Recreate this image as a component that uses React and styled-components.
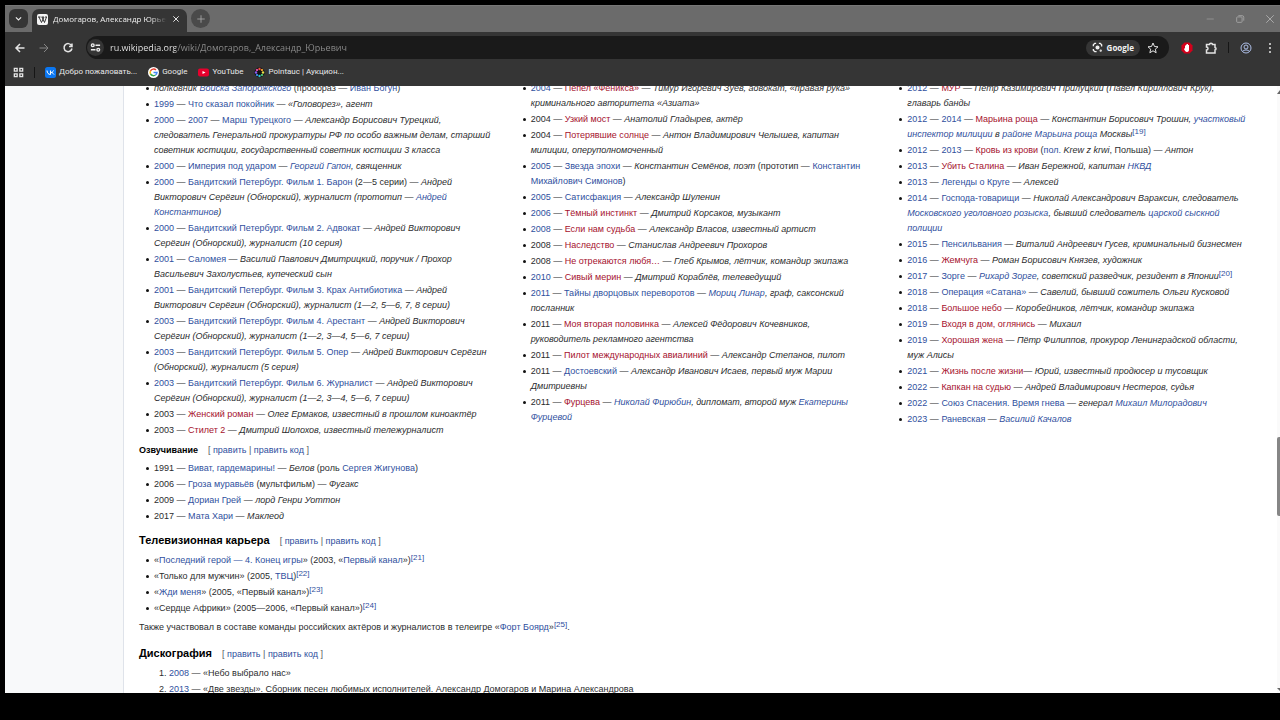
import React from 'react';
import styled, { createGlobalStyle } from 'styled-components';

// Global styles
const GlobalStyle = createGlobalStyle`
  * {
    box-sizing: border-box;
  }

  body {
    margin: 0;
    background: #000;
  }

  button {
    border: 0;
    padding: 0;
    background: none;
    color: inherit;
    font: inherit;
  }
`;

// Browser window
const Window = styled.div`
  display: flex;
  flex-direction: column;
  height: 100vh;
  padding: 5px 0 27px 5px;
  overflow: hidden;
  font-family: 'Open Sans', 'Noto Sans', sans-serif;
`;

const TabStrip = styled.header`
  display: flex;
  align-items: flex-end;
  flex: none;
  height: 27px;
  padding-left: 4px;
  background: #6b6b6b;
  border-top: 1px solid #777;
`;

const StripButton = styled.button`
  display: grid;
  place-items: center;
  width: 19px;
  height: 19px;
  margin: 0 4px 4px 0;
  border-radius: ${({ $round }) => ($round ? '50%' : '6px')};
  background: ${({ $round }) => ($round ? '#4a4a4a' : '#353535')};
  color: ${({ $round }) => ($round ? '#aaa' : '#eee')};
`;

const Tab = styled.div`
  display: flex;
  align-items: center;
  gap: 5px;
  width: 155px;
  height: 23px;
  margin-right: 4px;
  padding: 0 7px 3px 5px;
  border-radius: 7px 7px 0 0;
  background: #353535;
  color: #eee;
`;

const TabTitle = styled.span`
  flex: 1;
  overflow: hidden;
  font-size: 8px;
  line-height: 12px;
  white-space: nowrap;
  mask-image: linear-gradient(to right, #000 85%, transparent);
`;

const IconButton = styled.button`
  display: grid;
  place-items: center;
  flex: none;
  color: ${({ $color }) => $color || '#e4e4e4'};
`;

const WindowControls = styled.div`
  display: flex;
  align-items: center;
  gap: 20px;
  height: 26px;
  margin-left: auto;
  padding-right: 5px;
`;

const Toolbar = styled.nav`
  display: flex;
  align-items: center;
  flex: none;
  gap: 12px;
  height: 31px;
  padding: 0 4px 0 9px;
  background: #353535;
`;

const AddressBar = styled.div`
  display: flex;
  align-items: center;
  flex: 1;
  gap: 6px;
  height: 23px;
  padding: 0 10px 0 1px;
  border-radius: 12px;
  background: #1a1a1a;
`;

const SiteInfo = styled.button`
  display: grid;
  place-items: center;
  width: 17px;
  height: 17px;
  border-radius: 50%;
  background: #353535;
  color: #eee;
`;

const AddressInput = styled.input`
  flex: 1;
  min-width: 0;
  padding: 0;
  border: 0;
  outline: 0;
  background: linear-gradient(to right, #f2f2f2 66px, #8f8f8f 66px);
  background-clip: text;
  -webkit-background-clip: text;
  color: transparent;
  font-family: inherit;
  font-size: 9px;
  line-height: 16px;
`;

const LensButton = styled.button`
  display: flex;
  align-items: center;
  gap: 4px;
  height: 16px;
  margin-right: 1px;
  padding: 0 6px;
  border-radius: 8px;
  background: #353535;
  color: #f2f2f2;
  font-size: 8px;
  font-weight: 700;
`;

const Separator = styled.span`
  width: 1px;
  height: 11px;
  margin: 0 -1px;
  background: #161616;
`;

const BookmarksBar = styled.nav`
  display: flex;
  align-items: center;
  flex: none;
  gap: 11px;
  height: 23px;
  padding: 0 8px 5px;
  background: #353535;
`;

const Bookmark = styled.a`
  display: flex;
  align-items: center;
  gap: 3px;
  color: #e8e8e8;
  font-family: Roboto, 'Noto Sans', sans-serif;
  font-size: 8px;
  line-height: 12px;
  text-decoration: none;
`;

// Article
const Viewport = styled.div`
  display: flex;
  flex: 1;
  min-height: 0;
  overflow: hidden;
  background: #fff;
`;

const SidePanel = styled.aside`
  flex: none;
  width: 119px;
  border-right: 1px solid #dfe3ea;
  background: #f8f9fa;
`;

const Article = styled.main`
  flex: 1;
  min-width: 0;
  margin-top: -5px;
  padding: 0 17px 0 15px;
  color: #2b2c2e;
  font-family: 'Liberation Sans', Arial, sans-serif;
  font-size: 9px;
  line-height: 15px;
`;

const Columns = styled.div`
  display: grid;
  grid-template-columns: repeat(3, 1fr);
  gap: 9px;
`;

const List = styled.ul`
  margin: 0;
  padding: 0 12px 0 15px;
  list-style: none;

  li {
    margin-bottom: 1px;
  }

  li::before {
    content: '';
    display: inline-block;
    width: 3px;
    height: 3px;
    margin: 0 5px 0 -8px;
    border-radius: 50%;
    background: #111;
    vertical-align: 1px;
  }
`;

const NumberedList = styled.ol`
  margin: 0;
  padding-left: 30px;

  li {
    margin-bottom: 1px;
    white-space: nowrap;
  }
`;

const Paragraph = styled.p`
  margin: 4px 0 10px;
`;

const Heading = styled.div`
  display: flex;
  align-items: baseline;
  gap: 10px;
  margin: ${({ $level }) => ($level === 4 ? '3px 0 3px' : '8px 0 4px')};

  h3,
  h4 {
    margin: 0;
    color: #000;
    font-size: ${({ $level }) => ($level === 4 ? '9px' : '11px')};
    line-height: 16px;
  }
`;

const EditLinks = styled.span`
  color: #54595d;
`;

const Link = styled.a`
  color: ${({ $missing }) => ($missing ? '#a5112d' : '#2f4f9e')};
  text-decoration: none;
`;

const Sup = styled.sup`
  font-size: 8px;
  line-height: 1;
  vertical-align: 3px;
`;

const Scrollbar = styled.div`
  display: flex;
  flex-direction: column;
  flex: none;
  width: 3px;
  padding: 4px 0 2px;
  background: #fafafa;
`;

const ScrollSpace = styled.span`
  flex: ${({ $grow }) => $grow};
`;

const ScrollThumb = styled.span`
  height: 79px;
  border-radius: 2px 0 0 2px;
  background: #868686;
`;

const L = ({ children }) => <Link href="#">{children}</Link>;
const R = ({ children }) => <Link href="#" $missing>{children}</Link>;
const Ref = ({ n }) => <Sup><L>[{n}]</L></Sup>;

const Icon = ({ size = 12, box = 24, width = 2, children }) => (
  <svg
    width={size}
    height={size}
    viewBox={`0 0 ${box} ${box}`}
    fill="none"
    stroke="currentColor"
    strokeWidth={width}
    aria-hidden="true"
  >
    {children}
  </svg>
);

const SectionHeading = ({ level = 3, children }) => {
  const Tag = `h${level}`;
  return (
    <Heading $level={level}>
      <Tag>{children}</Tag>
      <EditLinks>[ <L>править</L> | <L>править код</L> ]</EditLinks>
    </Heading>
  );
};

const BrowserTabs = () => (
  <TabStrip>
    <StripButton aria-label="Поиск вкладок">
      <Icon size={9} width={3}><path d="M5 9l7 7 7-7" /></Icon>
    </StripButton>
    <Tab>
      <svg width="11" height="11" viewBox="0 0 22 22" aria-hidden="true">
        <rect width="22" height="22" rx="4" fill="#f4f4f4" />
        <path d="M2 6h5M9 6h5M16 6h4M4 6l5 11 5-11M10 6l5 11 4-11" stroke="#222" strokeWidth="1.8" fill="none" />
      </svg>
      <TabTitle>Домогаров, Александр Юрьевич</TabTitle>
      <IconButton aria-label="Закрыть вкладку">
        <Icon size={8} width={3}><path d="M4 4l16 16M20 4L4 20" /></Icon>
      </IconButton>
    </Tab>
    <StripButton $round aria-label="Новая вкладка">
      <Icon size={10}><path d="M12 3v18M3 12h18" /></Icon>
    </StripButton>
    <WindowControls>
      <IconButton $color="#999" aria-label="Свернуть">
        <Icon size={10}><path d="M4 12h17" /></Icon>
      </IconButton>
      <IconButton $color="#aaa" aria-label="Развернуть">
        <Icon size={10}>
          <rect x="4" y="7" width="13" height="13" rx="2" />
          <path d="M8 4h9a4 4 0 0 1 4 4v8" />
        </Icon>
      </IconButton>
      <IconButton $color="#b4b4b4" aria-label="Закрыть">
        <Icon size={10}><path d="M3 3l18 18M21 3L3 21" /></Icon>
      </IconButton>
    </WindowControls>
  </TabStrip>
);

const BrowserToolbar = () => (
  <Toolbar>
    <IconButton aria-label="Назад">
      <Icon width={3}><path d="M21 12H4M12 4l-8 8 8 8" /></Icon>
    </IconButton>
    <IconButton $color="#858585" aria-label="Вперёд">
      <Icon><path d="M3 12h17M12 4l8 8-8 8" /></Icon>
    </IconButton>
    <IconButton aria-label="Обновить">
      <Icon width={3}><path d="M19 7a8 8 0 1 0 1 6M20 3v6h-6" /></Icon>
    </IconButton>
    <AddressBar>
      <SiteInfo aria-label="Сведения о сайте">
        <Icon size={11} width={3}>
          <circle cx="6" cy="7" r="3" />
          <circle cx="18" cy="17" r="3" />
          <path d="M12 7h10M2 17h10" />
        </Icon>
      </SiteInfo>
      <AddressInput
        aria-label="Адресная строка"
        defaultValue="ru.wikipedia.org/wiki/Домогаров,_Александр_Юрьевич"
      />
      <LensButton>
        <Icon size={11} width={3}>
          <path d="M3 9V6l3-3h3M15 3h3l3 3v4M3 15v3l3 3h4" />
          <circle cx="12" cy="12" r="3" fill="currentColor" />
          <circle cx="19" cy="19" r="1" />
        </Icon>
        Google
      </LensButton>
      <IconButton aria-label="Добавить в закладки">
        <Icon><path d="M12 2l3 7 7 .6-5.4 4.8L18.300 21.500 12 17.600 5.700 21.500l1.700-7.100L2 9.600 9 9z" /></Icon>
      </IconButton>
    </AddressBar>
    <IconButton aria-label="Блокировщик рекламы">
      <svg width="12" height="12" viewBox="0 0 24 24" aria-hidden="true">
        <path d="M7 1h10l6 6v10l-6 6H7l-6-6V7z" fill="#d3001b" />
        <path d="M8 12V7h2V5h2v-1h2v2h2v9c0 3-1 5-4 5-3 0-5-3-6-6z" fill="#fff" />
      </svg>
    </IconButton>
    <IconButton aria-label="Расширения">
      <Icon size={12} width={3}>
        <path d="M3 5h6a3 2.500 0 0 1 6 0h5v6a2 2.500 0 0 1 0 5v6H3v-6a3 3 0 0 0 0-6z" />
      </Icon>
    </IconButton>
    <Separator />
    <IconButton $color="#aebfe8" aria-label="Профиль">
      <Icon>
        <circle cx="12" cy="12" r="10" />
        <circle cx="12" cy="10" r="4" />
        <path d="M5 19c3-4 11-4 14 0" />
      </Icon>
    </IconButton>
    <IconButton aria-label="Меню">
      <Icon>
        <g fill="currentColor" stroke="none">
          <circle cx="12" cy="4" r="2" />
          <circle cx="12" cy="12" r="2" />
          <circle cx="12" cy="20" r="2" />
        </g>
      </Icon>
    </IconButton>
  </Toolbar>
);

const Bookmarks = () => (
  <BookmarksBar>
    <IconButton aria-label="Приложения">
      <Icon size={11} width={3}>
        <path d="M3 3h6v6H3zM15 3h6v6h-6zM3 15h6v6H3zM15 15h6v6h-6z" />
      </Icon>
    </IconButton>
    <Separator />
    <Bookmark href="#">
      <svg width="11" height="11" viewBox="0 0 22 22" aria-hidden="true">
        <rect width="22" height="22" rx="5" fill="#0b77f2" />
        <path d="M4 7c0 5 3 8 7 8V7M11 11c3 0 5-1 6-4M11 11c3 0 5 1 7 4" stroke="#fff" strokeWidth="2" fill="none" />
      </svg>
      Добро пожаловать...
    </Bookmark>
    <Bookmark href="#">
      <svg width="11" height="11" viewBox="0 0 22 22" aria-hidden="true">
        <circle cx="11" cy="11" r="11" fill="#fff" />
        <g fill="none" strokeWidth="3">
          <path d="M5 8a7 7 0 0 1 11-2" stroke="#ea4335" />
          <path d="M5 8a7 7 0 0 0 0 6" stroke="#fbbc05" />
          <path d="M5 14a7 7 0 0 0 10 2" stroke="#34a853" />
          <path d="M11 11h7a7 7 0 0 1-3 5" stroke="#4285f4" />
        </g>
      </svg>
      Google
    </Bookmark>
    <Bookmark href="#">
      <svg width="11" height="11" viewBox="0 0 22 22" aria-hidden="true">
        <rect y="3" width="22" height="16" rx="4" fill="#e6002d" />
        <path d="M9 8l6 3-6 3z" fill="#fff" />
      </svg>
      YouTube
    </Bookmark>
    <Bookmark href="#">
      <svg width="11" height="11" viewBox="0 0 22 22" aria-hidden="true">
        <circle cx="11" cy="11" r="10" fill="#111" />
        {['#f04b3c', '#f7a531', '#e8e04a', '#50c878', '#2cc6c6', '#3c8cf0', '#8c5cf0', '#ee4fae'].map((c, i) => (
          <circle key={c} cx="11" cy="4" r="2.4" fill={c} transform={`rotate(${i * 45} 11 11)`} />
        ))}
      </svg>
      Pointauc | Аукцион...
    </Bookmark>
  </BookmarksBar>
);

const Filmography = () => (
  <Columns>
    <List>
      <li><i>полковник <L>Войска Запорожского</L></i> (прообраз — <L>Иван Богун</L>)</li>
      <li><L>1999</L> — <L>Что сказал покойник</L> — <i>«Головорез», агент</i></li>
      <li><L>2000</L> — <L>2007</L> — <L>Марш Турецкого</L> — <i>Александр Борисович Турецкий, следователь Генеральной прокуратуры РФ по особо важным делам, старший советник юстиции, государственный советник юстиции 3 класса</i></li>
      <li><L>2000</L> — <L>Империя под ударом</L> — <i><L>Георгий Гапон</L>, священник</i></li>
      <li><L>2000</L> — <L>Бандитский Петербург. Фильм 1. Барон</L> (2—5 серии) — <i>Андрей Викторович Серёгин (Обнорский), журналист (прототип — <L>Андрей Константинов</L>)</i></li>
      <li><L>2000</L> — <L>Бандитский Петербург. Фильм 2. Адвокат</L> — <i>Андрей Викторович Серёгин (Обнорский), журналист (10 серия)</i></li>
      <li><L>2001</L> — <L>Саломея</L> — <i>Василий Павлович Дмитрицкий, поручик / Прохор Васильевич Захолустьев, купеческий сын</i></li>
      <li><L>2001</L> — <L>Бандитский Петербург. Фильм 3. Крах Антибиотика</L> — <i>Андрей Викторович Серёгин (Обнорский), журналист (1—2, 5—6, 7, 8 серии)</i></li>
      <li><L>2003</L> — <L>Бандитский Петербург. Фильм 4. Арестант</L> — <i>Андрей Викторович Серёгин (Обнорский), журналист (1—2, 3—4, 5—6, 7 серии)</i></li>
      <li><L>2003</L> — <L>Бандитский Петербург. Фильм 5. Опер</L> — <i>Андрей Викторович Серёгин (Обнорский), журналист (5 серия)</i></li>
      <li><L>2003</L> — <L>Бандитский Петербург. Фильм 6. Журналист</L> — <i>Андрей Викторович Серёгин (Обнорский), журналист (1—2, 3—4, 5—6, 7 серии)</i></li>
      <li>2003 — <R>Женский роман</R> — <i>Олег Ермаков, известный в прошлом киноактёр</i></li>
      <li>2003 — <R>Стилет 2</R> — <i>Дмитрий Шолохов, известный тележурналист</i></li>
    </List>
    <List>
      <li><L>2004</L> — <R>Пепел «Феникса»</R> — <i>Тимур Игоревич Зуев, адвокат, «правая рука» криминального авторитета «Азиата»</i></li>
      <li>2004 — <R>Узкий мост</R> — <i>Анатолий Гладырев, актёр</i></li>
      <li>2004 — <R>Потерявшие солнце</R> — <i>Антон Владимирович Челышев, капитан милиции, оперуполномоченный</i></li>
      <li><L>2005</L> — <L>Звезда эпохи</L> — <i>Константин Семёнов, поэт</i> (прототип — <L>Константин Михайлович Симонов</L>)</li>
      <li><L>2005</L> — <L>Сатисфакция</L> — <i>Александр Шуленин</i></li>
      <li><L>2006</L> — <R>Тёмный инстинкт</R> — <i>Дмитрий Корсаков, музыкант</i></li>
      <li><L>2008</L> — <R>Если нам судьба</R> — <i>Александр Власов, известный артист</i></li>
      <li>2008 — <R>Наследство</R> — <i>Станислав Андреевич Прохоров</i></li>
      <li>2008 — <R>Не отрекаются любя…</R> — <i>Глеб Крымов, лётчик, командир экипажа</i></li>
      <li><L>2010</L> — <R>Сивый мерин</R> — <i>Дмитрий Кораблёв, телеведущий</i></li>
      <li><L>2011</L> — <L>Тайны дворцовых переворотов</L> — <i><L>Мориц Линар</L>, граф, саксонский посланник</i></li>
      <li>2011 — <R>Моя вторая половинка</R> — <i>Алексей Фёдорович Кочевников, руководитель рекламного агентства</i></li>
      <li>2011 — <R>Пилот международных авиалиний</R> — <i>Александр Степанов, пилот</i></li>
      <li>2011 — <L>Достоевский</L> — <i>Александр Иванович Исаев, первый муж Марии Дмитриевны</i></li>
      <li>2011 — <R>Фурцева</R> — <i><L>Николай Фирюбин</L>, дипломат, второй муж <L>Екатерины Фурцевой</L></i></li>
    </List>
    <List>
      <li><L>2012</L> — <R>МУР</R> — <i>Пётр Казимирович Прилуцкий (Павел Кириллович Крук), главарь банды</i></li>
      <li><L>2012</L> — <L>2014</L> — <R>Марьина роща</R> — <i>Константин Борисович Трошин, <L>участковый инспектор милиции</L> в <L>районе Марьина роща</L> Москвы</i><Ref n={19} /></li>
      <li><L>2012</L> — <L>2013</L> — <R>Кровь из крови</R> (<L>пол.</L> <i>Krew z krwi</i>, Польша) — <i>Антон</i></li>
      <li><L>2013</L> — <R>Убить Сталина</R> — <i>Иван Бережной, капитан <L>НКВД</L></i></li>
      <li><L>2013</L> — <L>Легенды о Круге</L> — <i>Алексей</i></li>
      <li><L>2014</L> — <L>Господа-товарищи</L> — <i>Николай Александрович Вараксин, следователь <L>Московского уголовного розыска</L>, бывший следователь <L>царской сыскной полиции</L></i></li>
      <li><L>2015</L> — <L>Пенсильвания</L> — <i>Виталий Андреевич Гусев, криминальный бизнесмен</i></li>
      <li><L>2016</L> — <R>Жемчуга</R> — <i>Роман Борисович Князев, художник</i></li>
      <li><L>2017</L> — <L>Зорге</L> — <i><L>Рихард Зорге</L>, советский разведчик, резидент в Японии</i><Ref n={20} /></li>
      <li><L>2018</L> — <L>Операция «Сатана»</L> — <i>Савелий, бывший сожитель Ольги Кусковой</i></li>
      <li><L>2018</L> — <R>Большое небо</R> — <i>Коробейников, лётчик, командир экипажа</i></li>
      <li><L>2019</L> — <R>Входя в дом, оглянись</R> — <i>Михаил</i></li>
      <li><L>2019</L> — <R>Хорошая жена</R> — <i>Пётр Филиппов, прокурор Ленинградской области, муж Алисы</i></li>
      <li><L>2021</L> — <R>Жизнь после жизни</R>— <i>Юрий, известный продюсер и тусовщик</i></li>
      <li><L>2022</L> — <R>Капкан на судью</R> — <i>Андрей Владимирович Нестеров, судья</i></li>
      <li><L>2022</L> — <L>Союз Спасения. Время гнева</L> — <i>генерал <L>Михаил Милорадович</L></i></li>
      <li><L>2023</L> — <L>Раневская</L> — <i><L>Василий Качалов</L></i></li>
    </List>
  </Columns>
);

const App = () => {
  return (
    <>
      <GlobalStyle />
      <Window>
        <BrowserTabs />
        <BrowserToolbar />
        <Bookmarks />
        <Viewport>
          <SidePanel />
          <Article>
            <Filmography />

            <SectionHeading level={4}>Озвучивание</SectionHeading>
            <List>
              <li>1991 — <L>Виват, гардемарины!</L> — <i>Белов</i> (роль <L>Сергея Жигунова</L>)</li>
              <li>2006 — <L>Гроза муравьёв</L> (мультфильм) — <i>Фугакс</i></li>
              <li>2009 — <L>Дориан Грей</L> — <i>лорд Генри Уоттон</i></li>
              <li>2017 — <L>Мата Хари</L> — <i>Маклеод</i></li>
            </List>

            <SectionHeading>Телевизионная карьера</SectionHeading>
            <List>
              <li>«<L>Последний герой — 4. Конец игры</L>» (2003, «<L>Первый канал</L>»)<Ref n={21} /></li>
              <li>«Только для мужчин» (2005, <L>ТВЦ</L>)<Ref n={22} /></li>
              <li>«<L>Жди меня</L>» (2005, «Первый канал»)<Ref n={23} /></li>
              <li>«Сердце Африки» (2005—2006, «Первый канал»)<Ref n={24} /></li>
            </List>
            <Paragraph>
              Также участвовал в составе команды российских актёров и журналистов в телеигре «<L>Форт Боярд</L>»<Ref n={25} />.
            </Paragraph>

            <SectionHeading>Дискография</SectionHeading>
            <NumberedList>
              <li><L>2008</L> — «Небо выбрало нас»</li>
              <li><L>2013</L> — «Две звезды». Сборник песен любимых исполнителей. Александр Домогаров и Марина Александрова</li>
            </NumberedList>
          </Article>
          <Scrollbar>
            <svg width="3" height="4" viewBox="0 0 3 4" aria-hidden="true">
              <path d="M0 4l3-4v4z" fill="#666" />
            </svg>
            <ScrollSpace $grow={2} />
            <ScrollThumb />
            <ScrollSpace $grow={1} />
            <svg width="3" height="3" viewBox="0 0 3 3" aria-hidden="true">
              <path d="M0 0h3v3z" fill="#666" />
            </svg>
          </Scrollbar>
        </Viewport>
      </Window>
    </>
  );
};

export default App;
